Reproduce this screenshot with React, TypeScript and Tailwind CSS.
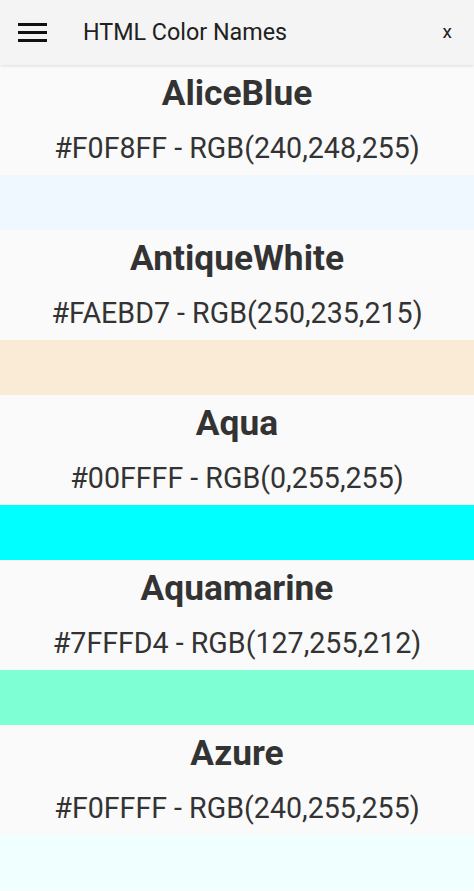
import React from "react";

const colors = [
  { name: "AliceBlue", hex: "#F0F8FF", rgb: "240,248,255" },
  { name: "AntiqueWhite", hex: "#FAEBD7", rgb: "250,235,215" },
  { name: "Aqua", hex: "#00FFFF", rgb: "0,255,255" },
  { name: "Aquamarine", hex: "#7FFFD4", rgb: "127,255,212" },
  { name: "Azure", hex: "#F0FFFF", rgb: "240,255,255" },
];

export default function App() {
  return (
    <div
      className="w-[474px] h-[891px] overflow-hidden bg-[#fafafa] flex flex-col"
      style={{ fontFamily: "Roboto, 'Liberation Sans', sans-serif" }}
    >
      <header className="h-[65px] shrink-0 bg-[#f4f4f4] flex items-center shadow-[0_1px_3px_rgba(0,0,0,0.12)] relative z-10">
        <div className="w-[29px] ml-[18px] flex flex-col gap-[5px]">
          <div className="h-[3px] bg-[#111]" />
          <div className="h-[3px] bg-[#111]" />
          <div className="h-[3px] bg-[#111]" />
        </div>
        <div className="ml-[36px] text-[23.3px] text-[#212121] leading-none">HTML Color Names</div>
        <div className="ml-auto mr-[22px] text-[19px] text-[#212121] leading-none pb-[2px]">x</div>
      </header>
      <div className="flex flex-col">
        {colors.map((c) => (
          <div key={c.name} className="flex flex-col">
            <div className="h-[110px] flex flex-col items-center text-[#333]">
              <div className="mt-[7px] text-[35.3px] font-bold leading-[42px]">{c.name}</div>
              <div className="mt-[18px] text-[28.6px] leading-[32px] whitespace-nowrap">
                {c.hex} - RGB({c.rgb})
              </div>
            </div>
            <div className="h-[55px]" style={{ backgroundColor: c.hex }} />
          </div>
        ))}
      </div>
    </div>
  );
}
